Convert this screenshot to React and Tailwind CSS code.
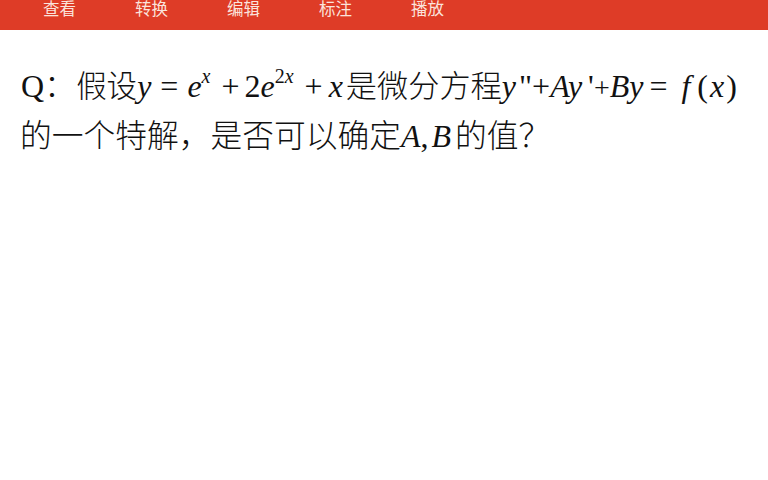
const cjk = "font-['Noto_Sans_CJK_SC',sans-serif] font-light";
const sup = "relative top-[-14px] text-[20px] leading-none";

const tabs = ["查看", "转换", "编辑", "标注", "播放"];

const App = () => {
  return (
    <div className="h-[480px] w-[768px] overflow-hidden bg-white font-['Liberation_Serif','Noto_Sans_CJK_SC',serif] text-[#111]">
      <div className="flex h-[30px] items-start gap-[59px] bg-[#de3c27] pl-[43px] font-['Noto_Sans_CJK_SC',sans-serif] text-[16.5px] leading-[16px] text-[#fbe3dc]">
        {tabs.map((tab) => (
          <span key={tab}>{tab}</span>
        ))}
      </div>
      <div className="pl-[21px] pt-[28px] text-[32px] leading-[50px] whitespace-nowrap">
        <div className="h-[50px]">
          <span>Q</span>
          <span className={cjk}>：</span>
          <span className={`${cjk} text-[30.5px]`}>假设</span>
          <span className="italic">y</span>
          <span className="ml-[9px]">=</span>
          <span className="ml-[9px] italic">e</span>
          <sup className={`${sup} italic`}>x</sup>
          <span className="ml-[11px]">+</span>
          <span className="ml-[5px]">2</span>
          <span className="italic">e</span>
          <sup className={sup}>2<span className="italic">x</span></sup>
          <span className="ml-[11px]">+</span>
          <span className="ml-[6px] italic">x</span>
          <span className={`${cjk} ml-[3px] text-[31.2px]`}>是微分方程</span>
          <span className="italic">y</span>
          <span className="ml-[3px]">"</span>
          <span>+</span>
          <span className="italic">Ay</span>
          <span className="ml-[6px]">'</span>
          <span className="text-[28px]">+</span>
          <span className="italic">By</span>
          <span className="ml-[6px]">=</span>
          <span className="ml-[14px] italic">f</span>
          <span className="ml-[7px]">(</span>
          <span className="ml-[2px] italic">x</span>
          <span className="ml-[2px]">)</span>
        </div>
        <div className="ml-[-1px] h-[50px]">
          <span className={`${cjk} text-[31.75px]`}>的一个特解，是否可以确定</span>
          <span className="italic">A</span>
          <span>,</span>
          <span className="ml-[3px] italic">B</span>
          <span className={`${cjk} ml-[4px] text-[31.75px]`}>的值？</span>
        </div>
      </div>
    </div>
  );
};

export default App;
